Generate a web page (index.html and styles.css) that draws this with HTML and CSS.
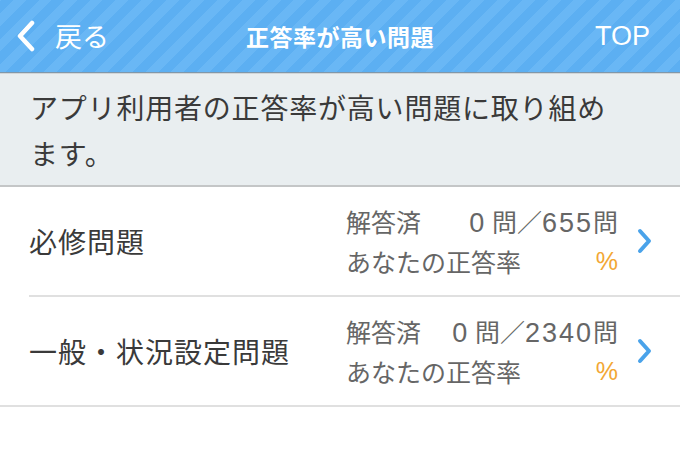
FILE: index.html
```html
<!DOCTYPE html>
<html lang="ja">
<head>
  <meta charset="UTF-8">
  <meta name="viewport" content="width=device-width, initial-scale=1.0">
  <title>正答率が高い問題</title>
  <link rel="stylesheet" href="styles.css">
</head>
<body>
  <header class="navbar">
    <a class="nav-back" href="#">
      <svg class="back-icon" width="20" height="32" viewBox="0 0 20 32">
        <polyline points="16,3 4,16 16,29" fill="none" stroke="#fff" stroke-width="4.5" stroke-linecap="round" stroke-linejoin="round"/>
      </svg>
      <span>戻る</span>
    </a>
    <h1 class="nav-title">正答率が高い問題</h1>
    <a class="nav-top" href="#">TOP</a>
  </header>

  <div class="intro">
    <p>アプリ利用者の正答率が高い問題に取り組めます。</p>
  </div>

  <ul class="list">
    <li class="list-item">
      <span class="item-name">必修問題</span>
      <div class="item-stats">
        <div class="stat-row">
          <span>解答済</span>
          <span><span class="num">0</span> 問／<span class="num">655</span>問</span>
        </div>
        <div class="stat-row">
          <span>あなたの正答率</span>
          <span class="rate">%</span>
        </div>
      </div>
      <svg class="chevron" width="18" height="28" viewBox="0 0 18 28">
        <polyline points="4,4 13,14 4,24" fill="none" stroke="#4aa3ea" stroke-width="4" stroke-linecap="round" stroke-linejoin="round"/>
      </svg>
    </li>
    <li class="list-item last">
      <span class="item-name">一般・状況設定問題</span>
      <div class="item-stats">
        <div class="stat-row">
          <span>解答済</span>
          <span><span class="num">0</span> 問／<span class="num">2340</span>問</span>
        </div>
        <div class="stat-row">
          <span>あなたの正答率</span>
          <span class="rate">%</span>
        </div>
      </div>
      <svg class="chevron" width="18" height="28" viewBox="0 0 18 28">
        <polyline points="4,4 13,14 4,24" fill="none" stroke="#4aa3ea" stroke-width="4" stroke-linecap="round" stroke-linejoin="round"/>
      </svg>
    </li>
  </ul>
</body>
</html>
```

FILE: styles.css
```css
body {
  margin: 0;
  width: 680px;
  background: #fff;
  font-family: "Noto Sans CJK JP", "Noto Sans", sans-serif;
  color: #333;
}
a {
  color: #fff;
  text-decoration: none;
}
.navbar {
  display: grid;
  grid-template-columns: 1fr auto 1fr;
  align-items: center;
  height: 72px;
  background: repeating-linear-gradient(-45deg, #5caff2 0, #5caff2 9px, #69b7f5 9px, #69b7f5 18px);
  border-bottom: 1px solid #7f97aa;
  box-shadow: 0 1px 0 #d2d6d8;
}
.nav-back {
  display: flex;
  align-items: center;
  padding-left: 16px;
  font-size: 27px;
}
.nav-back span {
  margin-left: 19px;
  margin-top: -2px;
}
.nav-title {
  margin: 0;
  color: #fff;
  font-size: 23px;
  font-weight: bold;
  letter-spacing: 0.5px;
}
.nav-top {
  justify-self: end;
  padding-right: 30px;
  font-family: "Liberation Sans", Arial, sans-serif;
  font-size: 27px;
}
.intro {
  margin-top: 1px;
  background: #e9eef0;
  border-bottom: 2px solid #c4c6c7;
  padding: 10px 50px 9px 30px;
}
.intro p {
  margin: 0;
  font-size: 28px;
  line-height: 46px;
  letter-spacing: 0.8px;
  color: #3a3a3a;
}
.list {
  list-style: none;
  margin: 0;
  padding: 0;
}
.list-item {
  display: flex;
  align-items: center;
  height: 108px;
  margin-left: 29px;
  border-bottom: 2px solid #e0e0e0;
}
.list-item.last {
  margin-left: 0;
  padding-left: 29px;
}
.item-name {
  flex: 1;
  font-size: 28px;
  letter-spacing: 1px;
  color: #3a3a3a;
}
.item-stats {
  width: 272px;
  font-size: 25px;
  line-height: 38px;
  color: #666;
}
.stat-row {
  display: flex;
  justify-content: space-between;
}
.num {
  font-family: "Liberation Sans", Arial, sans-serif;
  font-size: 27px;
  letter-spacing: 2px;
}
.rate {
  color: #f2a735;
  font-family: "Liberation Sans", Arial, sans-serif;
}
.chevron {
  margin: 0 26px 0 18px;
}
```
